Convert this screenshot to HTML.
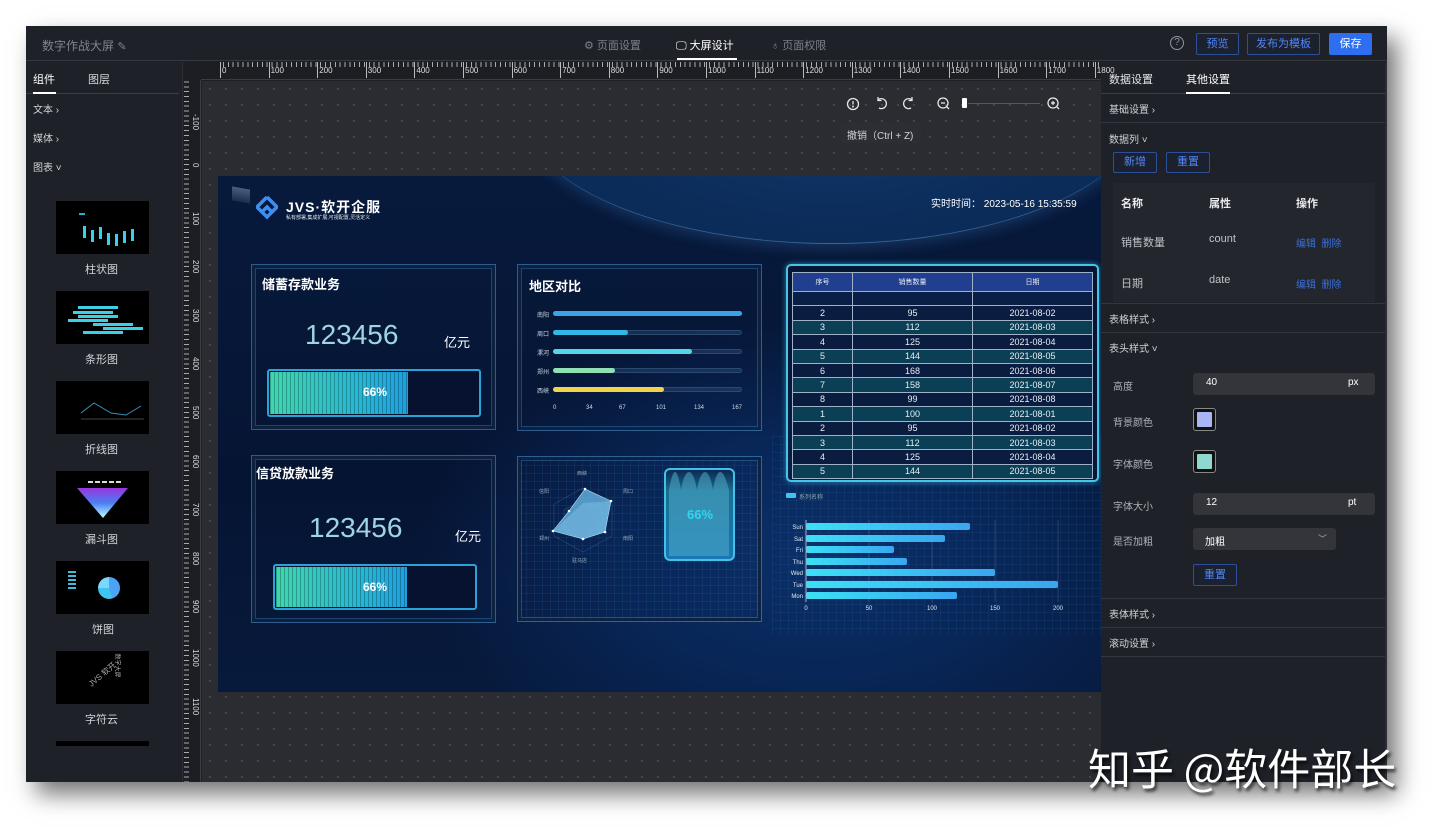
<!DOCTYPE html>
<html><head><meta charset="utf-8">
<style>
*{box-sizing:border-box;margin:0;padding:0}
body{width:1440px;height:835px;background:#fff;position:relative;overflow:hidden;font-family:"Liberation Sans","Noto Sans CJK SC",sans-serif;}
.a{position:absolute}
#win{position:absolute;left:26px;top:26px;width:1361px;height:756px;background:#1e2027;box-shadow:10px 12px 22px rgba(0,0,0,.55);overflow:hidden}
.t{position:absolute;white-space:nowrap;font-size:11px;color:#d0d3d8}
.ln{position:absolute;height:1px;background:#33363d}
.btnb{position:absolute;border:1px solid #2d4f9a;border-radius:2px;color:#4f86f7;font-size:11px;text-align:center;background:#1c2130}
.card{position:absolute;border:1px solid rgba(80,150,210,.55);box-shadow:inset 0 0 0 3px rgba(10,30,60,.9),inset 0 0 0 4px rgba(80,150,210,.35)}
.ct{position:absolute;color:#fff;font-weight:bold;font-size:13px;white-space:nowrap}
.num{position:absolute;color:#9fd4e3;font-size:28px;white-space:nowrap}
.bar{position:absolute;border:2px solid #2aa3d8;border-radius:3px;background:#061230}
.fill{position:absolute;left:1px;top:1px;bottom:1px;background:repeating-linear-gradient(90deg,rgba(0,0,0,.25) 0 1px,transparent 1px 4px),linear-gradient(90deg,#3fd6b0,#24b4d6 70%,#1e9fe0)}
.pct{position:absolute;color:#fff;font-weight:bold;font-size:12px}
.hb{position:absolute;height:5px;border-radius:3px;background:rgba(40,70,110,.5);border:1px solid rgba(60,100,140,.5)}
.hf{position:absolute;height:5px;border-radius:3px}
.rl{position:absolute;font-size:6px;color:#cfd8e6;white-space:nowrap}
table{border-collapse:collapse;font-size:9px;color:#e8eef5}
td{border:1px solid #9fb2c8;text-align:center;height:14.4px;padding:0}
</style></head><body>
<div id="win">
<!-- top bar -->
<div class="a" style="left:0;top:0;width:1361px;height:35px;background:#1f2128;border-bottom:1px solid #34373e"></div>
<div class="t" style="left:16px;top:11px;font-size:12px;color:#80848c">数字作战大屏 <span style="font-size:11px">✎</span></div>
<div class="t" style="left:558px;top:11px;font-size:11px;color:#7d8188">⚙ 页面设置</div>
<div class="t" style="left:650px;top:11px;font-size:11px;color:#fff">🖵 大屏设计</div>
<div class="a" style="left:651px;top:32px;width:60px;height:2px;background:#fff"></div>
<div class="t" style="left:745px;top:11px;font-size:11px;color:#7d8188">♁ 页面权限</div>
<div class="a" style="left:1144px;top:10px;width:14px;height:14px;border:1px solid #9095a0;border-radius:50%;color:#9095a0;font-size:10px;text-align:center;line-height:12px">?</div>
<div class="btnb" style="left:1170px;top:7px;width:43px;height:22px;line-height:20px">预览</div>
<div class="btnb" style="left:1221px;top:7px;width:73px;height:22px;line-height:20px">发布为模板</div>
<div class="a" style="left:1303px;top:7px;width:43px;height:22px;line-height:22px;background:#2e6ff2;border-radius:2px;color:#fff;font-size:11px;text-align:center">保存</div>

<!-- left panel -->
<div class="a" style="left:0;top:36px;width:157px;height:720px;background:#1f2128;border-right:1px solid #2b2e35"></div>
<div class="t" style="left:7px;top:45px;color:#fff;font-size:11px">组件</div>
<div class="t" style="left:62px;top:45px;color:#d4d6da;font-size:11px">图层</div>
<div class="ln" style="left:0;top:67px;width:153px;background:#3a3d44"></div>
<div class="a" style="left:7px;top:66px;width:23px;height:2px;background:#fff"></div>
<div class="t" style="left:7px;top:75px;font-size:10px">文本 ›</div>
<div class="t" style="left:7px;top:104px;font-size:10px">媒体 ›</div>
<div class="t" style="left:7px;top:133px;font-size:10px">图表 ˅</div>
<!-- thumbnails -->
<div class="a" style="left:30px;top:175px;width:93px;height:53px;background:#000">
 <div class="a" style="left:23px;top:12px;width:6px;height:2px;background:#3ac"></div>
 <div class="a" style="left:27px;top:25px;width:3px;height:12px;background:#3bd0e8;box-shadow:8px 4px 0 #3bd0e8,16px 1px 0 #3bd0e8,24px 7px 0 #3bd0e8,32px 8px 0 #3bd0e8,40px 5px 0 #3bd0e8,48px 3px 0 #3bd0e8"></div>
</div>
<div class="t" style="left:59px;top:235px;font-size:11px">柱状图</div>
<div class="a" style="left:30px;top:265px;width:93px;height:53px;background:#000">
 <div class="a" style="left:22px;top:15px;width:40px;height:3px;background:#3bd0e8;box-shadow:-5px 5px 0 #3bd0e8,0 9px 0 #3bd0e8,-10px 13px 0 #3bd0e8,15px 17px 0 #3bd0e8,25px 21px 0 #3bd0e8,5px 25px 0 #3bd0e8"></div>
</div>
<div class="t" style="left:59px;top:325px;font-size:11px">条形图</div>
<div class="a" style="left:30px;top:355px;width:93px;height:53px;background:#000">
 <svg class="a" width="93" height="53"><polyline points="25,32 38,22 55,32 70,34 85,25" fill="none" stroke="#3a8bb8" stroke-width="1"/><line x1="25" y1="38" x2="88" y2="38" stroke="#444"/></svg>
</div>
<div class="t" style="left:59px;top:415px;font-size:11px">折线图</div>
<div class="a" style="left:30px;top:445px;width:93px;height:53px;background:#000">
 <svg class="a" width="93" height="53"><polygon points="21,17 72,17 47,47" fill="url(#fg)"/><defs><linearGradient id="fg" x1="0" y1="0" x2="0" y2="1"><stop offset="0" stop-color="#9a35e0"/><stop offset=".5" stop-color="#4a7ff0"/><stop offset="1" stop-color="#bff"/></linearGradient></defs><g fill="#ddd"><rect x="32" y="10" width="5" height="2"/><rect x="39" y="10" width="5" height="2"/><rect x="46" y="10" width="5" height="2"/><rect x="53" y="10" width="5" height="2"/><rect x="60" y="10" width="5" height="2"/></g></svg>
</div>
<div class="t" style="left:59px;top:505px;font-size:11px">漏斗图</div>
<div class="a" style="left:30px;top:535px;width:93px;height:53px;background:#000">
 <div class="a" style="left:42px;top:16px;width:22px;height:22px;border-radius:50%;background:conic-gradient(#4aa3f5 0 45%,#3fc3f0 45% 75%,#7ad7ff 75%)"></div>
 <div class="a" style="left:12px;top:10px;width:8px;height:2px;background:#4bd;box-shadow:0 4px 0 #4bd,0 8px 0 #4bd,0 12px 0 #4bd,0 16px 0 #4bd"></div>
</div>
<div class="t" style="left:66px;top:595px;font-size:11px">饼图</div>
<div class="a" style="left:30px;top:625px;width:93px;height:53px;background:#000;color:#aaa;font-size:8px;overflow:hidden"><span class="a" style="left:30px;top:18px;transform:rotate(-40deg)">JVS 软开</span><span class="a" style="left:50px;top:10px;transform:rotate(90deg);font-size:6px">数字大屏</span></div>
<div class="t" style="left:59px;top:685px;font-size:11px">字符云</div>
<div class="a" style="left:30px;top:715px;width:93px;height:5px;background:#000"></div>

<!-- rulers -->
<div class="a" style="left:158px;top:36px;width:17px;height:720px;background:#1c1e23;border-right:1px solid #3a3d44;background-image:repeating-linear-gradient(180deg,#aaa 0 1px,transparent 1px 4.86px);background-size:5px 100%;background-repeat:no-repeat;background-position:0 0"></div>
<div class="a" style="left:175px;top:36px;width:900px;height:18px;background:#1c1e23;border-bottom:1px solid #3a3d44;background-image:repeating-linear-gradient(90deg,#aaa 0 1px,transparent 1px 4.86px);background-size:100% 5px;background-repeat:no-repeat;background-position:22px 0"></div>
<div class="t" style="left:161px;top:37px;font-size:9px;color:#bbb">◉</div>
<!-- canvas -->
<div class="a" style="left:176px;top:55px;width:899px;height:701px;background-color:#2a2c31;background-image:radial-gradient(circle,#4a4d54 0.8px,transparent 1.2px);background-size:16px 16px"></div>
<div class="a" style="left:158px;top:36px;width:17px;height:18px;background:#1c1e23"></div>

<!-- toolbar -->
<svg class="a" style="left:820px;top:69px" width="220" height="20" fill="none" stroke="#e6e6e6" stroke-width="1.3">
 <circle cx="7" cy="9" r="5.5"/><line x1="7" y1="6" x2="7" y2="9.5"/><circle cx="7" cy="11.5" r=".4"/>
 <path d="M32 5 A5 5 0 1 1 33 13"/><path d="M32 2 L32 5.5 L35.5 5.5"/>
 <path d="M66 5 A5 5 0 1 0 65 13"/><path d="M66 2 L66 5.5 L62.5 5.5"/>
 <circle cx="97" cy="8" r="5"/><line x1="95" y1="8" x2="99" y2="8"/><line x1="101" y1="12" x2="103" y2="14"/>
 <circle cx="207" cy="8" r="5"/><line x1="205" y1="8" x2="209" y2="8"/><line x1="207" y1="6" x2="207" y2="10"/><line x1="211" y1="12" x2="213" y2="14"/>
</svg>
<div class="a" style="left:942px;top:77px;width:72px;height:1px;background:#556"></div>
<div class="a" style="left:936px;top:72px;width:5px;height:10px;background:#fff;border-radius:1px"></div>
<div class="a" style="left:815px;top:97px;width:80px;height:20px;background:#2c2e33"></div>
<div class="t" style="left:821px;top:101px;font-size:10px;color:#cfd2d6">撤销（Ctrl + Z)</div>

<!-- big screen -->
<div class="a" style="left:192px;top:150px;width:883px;height:516px;overflow:hidden;background:radial-gradient(ellipse 500px 300px at 600px 380px,#0b3068 0%,#082657 40%,transparent 80%),linear-gradient(180deg,#071a3c,#061433 60%,#071a3c)">
<div class="a" style="left:-26px;top:0;width:909px;height:516px">
 <div class="a" style="left:330px;top:-200px;width:620px;height:268px;border-radius:50%;background:radial-gradient(ellipse at 50% 30%,#113d72,#0b2b58 70%);border-bottom:1px solid rgba(110,180,230,.4);box-shadow:0 4px 14px rgba(70,140,210,.25)"></div>
 <div class="a" style="left:580px;top:260px;width:330px;height:200px;background-image:linear-gradient(rgba(60,130,200,.10) 1px,transparent 1px),linear-gradient(90deg,rgba(60,130,200,.10) 1px,transparent 1px);background-size:8px 8px"></div>
 <!-- logo -->
 <div class="a" style="left:40px;top:12px;width:18px;height:14px;background:linear-gradient(180deg,rgba(200,220,240,.35),rgba(200,220,240,.1));transform:skewY(10deg)"></div>
 <svg class="a" style="left:64px;top:20px" width="22" height="24"><path d="M11 1 L21 11 L16 16 L11 11 L6 16 L11 21 L16 16" fill="none" stroke="#3d8ef0" stroke-width="3.5"/><path d="M11 1 L1 11 L6 16" fill="none" stroke="#3d8ef0" stroke-width="3.5"/></svg>
 <div class="t" style="left:94px;top:21px;color:#fff;font-size:14px;font-weight:bold;letter-spacing:1px">JVS·软开企服</div>
 <div class="t" style="left:94px;top:38px;color:#dfe6f0;font-size:5px">私有部署,集成扩展,可视配置,灵活定义</div>
 <div class="t" style="left:739px;top:19px;color:#fff;font-size:10px">实时时间： 2023-05-16 15:35:59</div>

 <!-- card1 -->
 <div class="card" style="left:59px;top:88px;width:245px;height:166px"></div>
 <div class="ct" style="left:70px;top:98px">储蓄存款业务</div>
 <div class="num" style="left:113px;top:143px">123456</div>
 <div class="t" style="left:252px;top:156px;color:#fff;font-size:13px">亿元</div>
 <div class="bar" style="left:75px;top:193px;width:214px;height:48px"><div class="fill" style="width:138px"></div><div class="pct" style="left:94px;top:14px">66%</div></div>

 <!-- card2 -->
 <div class="card" style="left:325px;top:88px;width:245px;height:167px"></div>
 <div class="ct" style="left:337px;top:100px">地区对比</div>
 <div class="rl" style="left:345px;top:134px">南阳</div><div class="hb" style="left:361px;top:135px;width:189px"></div><div class="hf" style="left:361px;top:135px;width:189px;background:#3aa2e6"></div>
 <div class="rl" style="left:345px;top:153px">周口</div><div class="hb" style="left:361px;top:154px;width:189px"></div><div class="hf" style="left:361px;top:154px;width:75px;background:#31b9e6"></div>
 <div class="rl" style="left:345px;top:172px">漯河</div><div class="hb" style="left:361px;top:173px;width:189px"></div><div class="hf" style="left:361px;top:173px;width:139px;background:#52d6e8"></div>
 <div class="rl" style="left:345px;top:191px">郑州</div><div class="hb" style="left:361px;top:192px;width:189px"></div><div class="hf" style="left:361px;top:192px;width:62px;background:#8fe0b4"></div>
 <div class="rl" style="left:345px;top:210px">西峡</div><div class="hb" style="left:361px;top:211px;width:189px"></div><div class="hf" style="left:361px;top:211px;width:111px;background:#f1d34a"></div>
 <div class="rl" style="left:361px;top:229px">0</div><div class="rl" style="left:394px;top:229px">34</div><div class="rl" style="left:427px;top:229px">67</div><div class="rl" style="left:464px;top:229px">101</div><div class="rl" style="left:502px;top:229px">134</div><div class="rl" style="left:540px;top:229px">167</div>

 <!-- table card -->
 <div class="a" style="left:594px;top:88px;width:313px;height:218px;border:2px solid #45c6e6;border-radius:5px;box-shadow:0 0 6px rgba(70,200,240,.6);background:rgba(6,20,50,.6)"></div>
 <table class="a" style="left:600px;top:96px;width:301px">
  <tr style="background:#213f8e"><td style="width:60px;height:19px;font-size:7px">序号</td><td style="width:120px;font-size:7px">销售数量</td><td style="font-size:7px">日期</td></tr>
  <tr style="background:#0a1f45"><td style="height:5px"></td><td></td><td></td></tr>
  <tr style="background:#0a1c40"><td>2</td><td>95</td><td>2021-08-02</td></tr>
  <tr style="background:#0b3f55"><td>3</td><td>112</td><td>2021-08-03</td></tr>
  <tr style="background:#0a1c40"><td>4</td><td>125</td><td>2021-08-04</td></tr>
  <tr style="background:#0b3f55"><td>5</td><td>144</td><td>2021-08-05</td></tr>
  <tr style="background:#0a1c40"><td>6</td><td>168</td><td>2021-08-06</td></tr>
  <tr style="background:#0b3f55"><td>7</td><td>158</td><td>2021-08-07</td></tr>
  <tr style="background:#0a1c40"><td>8</td><td>99</td><td>2021-08-08</td></tr>
  <tr style="background:#0b3f55"><td>1</td><td>100</td><td>2021-08-01</td></tr>
  <tr style="background:#0a1c40"><td>2</td><td>95</td><td>2021-08-02</td></tr>
  <tr style="background:#0b3f55"><td>3</td><td>112</td><td>2021-08-03</td></tr>
  <tr style="background:#0a1c40"><td>4</td><td>125</td><td>2021-08-04</td></tr>
  <tr style="background:#0b3f55"><td>5</td><td>144</td><td>2021-08-05</td></tr>
 </table>

 <!-- card4 -->
 <div class="card" style="left:59px;top:279px;width:245px;height:168px"></div>
 <div class="ct" style="left:64px;top:287px">信贷放款业务</div>
 <div class="num" style="left:117px;top:336px">123456</div>
 <div class="t" style="left:263px;top:350px;color:#fff;font-size:13px">亿元</div>
 <div class="bar" style="left:81px;top:388px;width:204px;height:46px"><div class="fill" style="width:131px"></div><div class="pct" style="left:88px;top:14px">66%</div></div>

 <!-- card5 -->
 <div class="card" style="left:325px;top:280px;width:245px;height:166px;background-image:linear-gradient(rgba(60,130,200,.12) 1px,transparent 1px),linear-gradient(90deg,rgba(60,130,200,.12) 1px,transparent 1px);background-size:8px 8px"></div>
 <svg class="a" style="left:325px;top:280px" width="245" height="166">
  <g fill="none" stroke="rgba(90,140,190,.4)" stroke-width=".6">
   <polygon points="66,32 95,48 95,80 66,96 37,80 37,48"/><polygon points="66,44 85,54 85,74 66,84 47,74 47,54"/>
  </g>
  <polygon points="68,33 94,45 88,76 66,83 36,75 52,55" fill="rgba(110,190,235,.75)" stroke="#bfe6ff" stroke-width=".6"/>
  <polygon points="66,47 94,45 88,76 66,83 36,75" fill="rgba(140,210,245,.35)"/>
  <g fill="#fff"><circle cx="68" cy="33" r="1.3"/><circle cx="94" cy="45" r="1.3"/><circle cx="88" cy="76" r="1.3"/><circle cx="66" cy="83" r="1.3"/><circle cx="36" cy="75" r="1.3"/><circle cx="52" cy="55" r="1.3"/></g>
  <g fill="#9ab" font-size="5" font-family="Noto Sans CJK SC"><text x="60" y="19">西峡</text><text x="106" y="37">周口</text><text x="106" y="84">南阳</text><text x="55" y="106">驻马店</text><text x="22" y="84">郑州</text><text x="22" y="37">信阳</text></g>
  <rect x="148" y="13" width="69" height="91" rx="5" fill="url(#lq)" stroke="#45c0e8" stroke-width="2"/>
  <defs><linearGradient id="lq" x1="0" y1="0" x2="0" y2="1"><stop offset="0" stop-color="#0a2650"/><stop offset=".25" stop-color="#1a6f90"/><stop offset="1" stop-color="#1778b5"/></linearGradient></defs>
  <path d="M152 34 C156 10,160 10,164 34 C168 10,176 10,180 34 C184 10,192 10,196 34 C200 10,206 10,212 34 L212 100 L152 100Z" fill="rgba(80,170,200,.55)"/>
  <text x="170" y="63" fill="#2fd6f0" font-size="13" font-weight="bold" font-family="Liberation Sans">66%</text>
 </svg>

 <!-- bar chart -->
 <div class="a" style="left:594px;top:317px;width:10px;height:5px;background:#3fc3f0;border-radius:1px"></div>
 <div class="rl" style="left:607px;top:316px;color:#8aa">系列名称</div>
 <svg class="a" style="left:580px;top:344px" width="300" height="100">
  <g stroke="rgba(120,150,180,.25)"><line x1="97" y1="0" x2="97" y2="82"/><line x1="160" y1="0" x2="160" y2="82"/><line x1="223" y1="0" x2="223" y2="82"/><line x1="286" y1="0" x2="286" y2="82"/></g>
  <defs><linearGradient id="bg" x1="0" x2="1"><stop offset="0" stop-color="#3ce0f5"/><stop offset="1" stop-color="#3aa6f0"/></linearGradient></defs>
  <g fill="url(#bg)">
   <rect x="34" y="3" width="164" height="7" rx="2"/><rect x="34" y="15" width="139" height="7" rx="2"/><rect x="34" y="26" width="88" height="7" rx="2"/><rect x="34" y="38" width="101" height="7" rx="2"/><rect x="34" y="49" width="189" height="7" rx="2"/><rect x="34" y="61" width="252" height="7" rx="2"/><rect x="34" y="72" width="151" height="7" rx="2"/>
  </g>
  <line x1="34" y1="0" x2="34" y2="82" stroke="#aab"/>
  <g fill="#e0e8f0" font-size="6" font-family="Liberation Sans" text-anchor="end"><text x="31" y="9">Sun</text><text x="31" y="21">Sat</text><text x="31" y="32">Fri</text><text x="31" y="44">Thu</text><text x="31" y="55">Wed</text><text x="31" y="67">Tue</text><text x="31" y="78">Mon</text></g>
  <g fill="#e0e8f0" font-size="6" font-family="Liberation Sans" text-anchor="middle"><text x="34" y="90">0</text><text x="97" y="90">50</text><text x="160" y="90">100</text><text x="223" y="90">150</text><text x="286" y="90">200</text></g>
 </svg>
</div>
</div>

<!-- right panel -->
<div class="a" style="left:1075px;top:36px;width:286px;height:720px;background:#1f2128"></div>
<div class="t" style="left:1083px;top:45px;font-size:11px;color:#e4e6ea">数据设置</div>
<div class="t" style="left:1160px;top:45px;font-size:11px;color:#fff">其他设置</div>
<div class="ln" style="left:1075px;top:67px;width:286px;background:#3a3d44"></div>
<div class="a" style="left:1160px;top:66px;width:44px;height:2px;background:#fff"></div>
<div class="t" style="left:1083px;top:75px;font-size:10px">基础设置 ›</div>
<div class="ln" style="left:1075px;top:96px;width:286px"></div>
<div class="t" style="left:1083px;top:105px;font-size:10px">数据列 ˅</div>
<div class="btnb" style="left:1087px;top:126px;width:44px;height:21px;line-height:19px">新增</div>
<div class="btnb" style="left:1140px;top:126px;width:44px;height:21px;line-height:19px">重置</div>
<div class="a" style="left:1087px;top:157px;width:262px;height:119px;background:#24262d"></div>
<div class="t" style="left:1095px;top:169px;font-size:11px;font-weight:bold;color:#e8eaee">名称</div>
<div class="t" style="left:1183px;top:169px;font-size:11px;font-weight:bold;color:#e8eaee">属性</div>
<div class="t" style="left:1270px;top:169px;font-size:11px;font-weight:bold;color:#e8eaee">操作</div>
<div class="t" style="left:1095px;top:208px;font-size:11px;color:#bfc2c8">销售数量</div>
<div class="t" style="left:1183px;top:207px;font-size:11px;color:#bfc2c8">count</div>
<div class="t" style="left:1270px;top:209px;font-size:10px;color:#3a6fd8">编辑&nbsp;&nbsp;删除</div>
<div class="t" style="left:1095px;top:249px;font-size:11px;color:#bfc2c8">日期</div>
<div class="t" style="left:1183px;top:248px;font-size:11px;color:#bfc2c8">date</div>
<div class="t" style="left:1270px;top:250px;font-size:10px;color:#3a6fd8">编辑&nbsp;&nbsp;删除</div>
<div class="ln" style="left:1075px;top:277px;width:286px"></div>
<div class="t" style="left:1083px;top:285px;font-size:10px">表格样式 ›</div>
<div class="ln" style="left:1075px;top:306px;width:286px"></div>
<div class="t" style="left:1083px;top:314px;font-size:10px">表头样式 ˅</div>
<div class="t" style="left:1087px;top:352px;font-size:10px;color:#aeb1b7">高度</div>
<div class="a" style="left:1167px;top:347px;width:182px;height:22px;background:#33353b;border-radius:3px"></div>
<div class="t" style="left:1180px;top:351px;font-size:10px;color:#fff">40</div>
<div class="t" style="left:1322px;top:351px;font-size:10px;color:#fff">px</div>
<div class="t" style="left:1087px;top:388px;font-size:10px;color:#aeb1b7">背景颜色</div>
<div class="a" style="left:1167px;top:382px;width:23px;height:23px;border:1px solid #888;border-radius:3px;background:#111;padding:3px"><div style="width:100%;height:100%;background:#aab5f5;border-radius:1px"></div></div>
<div class="t" style="left:1087px;top:430px;font-size:10px;color:#aeb1b7">字体颜色</div>
<div class="a" style="left:1167px;top:424px;width:23px;height:23px;border:1px solid #888;border-radius:3px;background:#111;padding:3px"><div style="width:100%;height:100%;background:#8fd8cf;border-radius:1px"></div></div>
<div class="t" style="left:1087px;top:472px;font-size:10px;color:#aeb1b7">字体大小</div>
<div class="a" style="left:1167px;top:467px;width:182px;height:22px;background:#33353b;border-radius:3px"></div>
<div class="t" style="left:1180px;top:471px;font-size:10px;color:#fff">12</div>
<div class="t" style="left:1322px;top:471px;font-size:10px;color:#fff">pt</div>
<div class="t" style="left:1087px;top:507px;font-size:10px;color:#aeb1b7">是否加粗</div>
<div class="a" style="left:1167px;top:502px;width:143px;height:22px;background:#33353b;border-radius:3px"></div>
<div class="t" style="left:1179px;top:507px;font-size:10px;color:#fff">加粗</div>
<div class="t" style="left:1292px;top:506px;font-size:9px;color:#aaa">﹀</div>
<div class="btnb" style="left:1167px;top:538px;width:44px;height:22px;line-height:20px">重置</div>
<div class="ln" style="left:1075px;top:572px;width:286px"></div>
<div class="t" style="left:1083px;top:580px;font-size:10px">表体样式 ›</div>
<div class="ln" style="left:1075px;top:601px;width:286px"></div>
<div class="t" style="left:1083px;top:609px;font-size:10px">滚动设置 ›</div>
<div class="ln" style="left:1075px;top:630px;width:286px"></div>
<div class="a" style="left:1359px;top:36px;width:2px;height:720px;background:#2a2d33"></div>
</div>

<!-- ruler labels -->
<div id="labels"></div>
<div class="a" style="left:1088px;top:746px;font-size:43px;color:#fff;white-space:nowrap;text-shadow:2px 3px 3px rgba(0,0,0,.7);font-family:'Noto Sans CJK SC',sans-serif;line-height:1">知乎 @软件部长</div>
<script>
var h='';
for(var i=0;i<=18;i++){var x=222+i*48.6;h+='<div class="t" style="left:'+x+'px;top:66px;font-size:8px;color:#ddd">'+(i*100)+'</div><div class="a" style="left:'+(x-2)+'px;top:62px;width:1px;height:16px;background:#bbb"></div>';}
for(var j=-1;j<=11;j++){var y=171+j*48.6;h+='<div class="t" style="left:200px;top:'+(y-8)+'px;font-size:8px;color:#ddd;transform:rotate(90deg);transform-origin:0 0">'+(j*100)+'</div>';}
document.getElementById('labels').innerHTML=h;
</script>
</body></html>
